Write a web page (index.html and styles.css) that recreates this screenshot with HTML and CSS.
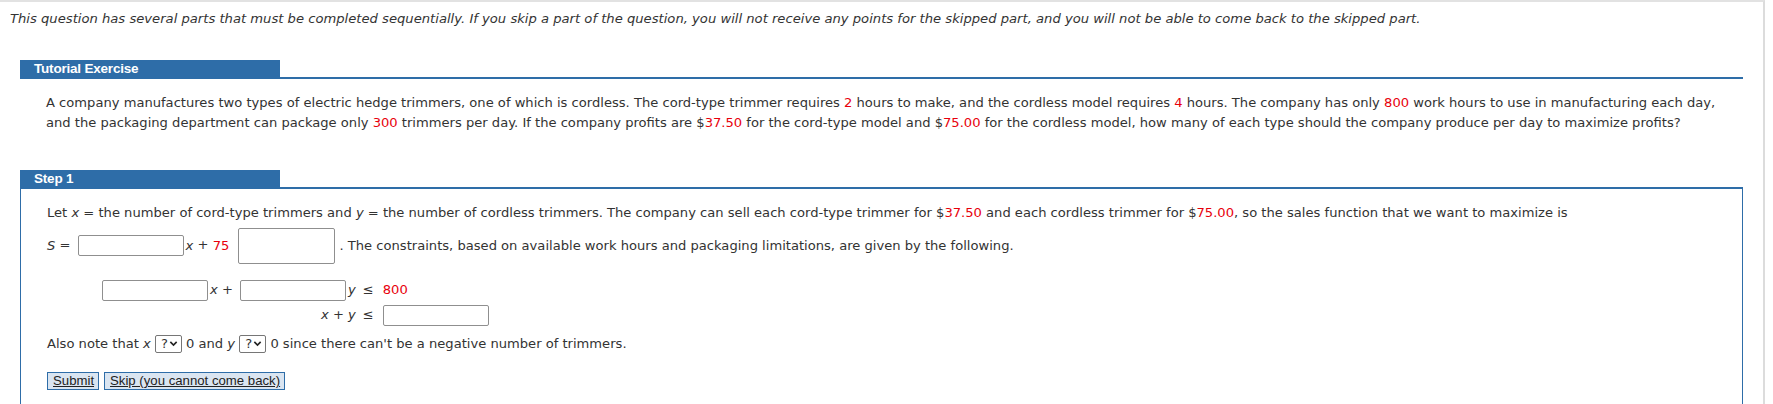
FILE: index.html
```html
<!DOCTYPE html>
<html>
<head>
<meta charset="utf-8">
<link rel="stylesheet" href="styles.css">
</head>
<body>
<div class="page">
  <p class="notice">This question has several parts that must be completed sequentially. If you skip a part of the question, you will not receive any points for the skipped part, and you will not be able to come back to the skipped part.</p>

  <div class="section">
    <div class="sec-head"><div class="sec-label">Tutorial Exercise</div><div class="sec-rule"></div></div>
    <div class="sec-body plain">
      <p class="para">A company manufactures two types of electric hedge trimmers, one of which is cordless. The cord-type trimmer requires <span class="red">2</span> hours to make, and the cordless model requires <span class="red">4</span> hours. The company has only <span class="red">800</span> work hours to use in manufacturing each day, and the packaging department can package only <span class="red">300</span> trimmers per day. If the company profits are $<span class="red">37.50</span> for the cord-type model and $<span class="red">75.00</span> for the cordless model, how many of each type should the company produce per day to maximize profits?</p>
    </div>
  </div>

  <div class="section step">
    <div class="sec-head"><div class="sec-label">Step 1</div><div class="sec-rule"></div></div>
    <div class="sec-body boxed">
      <p class="para">Let <i>x</i> = the number of cord-type trimmers and <i>y</i> = the number of cordless trimmers. The company can sell each cord-type trimmer for $<span class="red">37.50</span> and each cordless trimmer for $<span class="red">75.00</span>, so the sales function that we want to maximize is</p>
      <div class="sline"><i>S</i> = <span class="inp"></span><i>x</i> + <span class="red">75</span> <span class="inp tall"></span><span class="after">. The constraints, based on available work hours and packaging limitations, are given by the following.</span></div>
      <div class="cons">
        <div class="c-lhs"><span class="inp"></span><i>x</i> + <span class="inp"></span><i>y</i></div>
        <div class="c-op">≤</div>
        <div class="c-rhs red">800</div>
        <div class="c-lhs"><i>x</i> + <i>y</i></div>
        <div class="c-op">≤</div>
        <div class="c-rhs"><span class="inp"></span></div>
      </div>
      <p class="para note">Also note that <i>x</i> <span class="sel">?<svg viewBox="0 0 10 10" width="9" height="9"><path d="M1.5 3.2 L5 6.7 L8.5 3.2" fill="none" stroke="#222" stroke-width="1.8"/></svg></span> 0 and <i>y</i> <span class="sel">?<svg viewBox="0 0 10 10" width="9" height="9"><path d="M1.5 3.2 L5 6.7 L8.5 3.2" fill="none" stroke="#222" stroke-width="1.8"/></svg></span> 0 since there can't be a negative number of trimmers.</p>
      <div class="btns"><span class="btn">Submit</span><span class="btn">Skip (you cannot come back)</span></div>
    </div>
  </div>
</div>
</body>
</html>
```

FILE: styles.css
```css
html, body { margin: 0; padding: 0; background: #fff; }
body { font-family: "DejaVu Sans", Verdana, sans-serif; font-size: 13.1px; color: #333; }
.page {
  width: 1763px;
  min-height: 420px;
  border-top: 2px solid #e2e2e2;
  border-right: 2px solid #dcdcdc;
}
.notice {
  margin: 0;
  padding: 9px 0 0 10px;
  font-style: italic;
  font-size: 13.15px;
  line-height: 16px;
}
.section { margin-left: 20px; width: 1723px; margin-top: 33px; }
.step { margin-top: 37px; }
.sec-head { display: flex; align-items: stretch; }
.sec-label {
  width: 246px;
  padding: 2px 0 3px 14px;
  background: #2e6da8;
  color: #fff;
  font-family: "Liberation Sans", Arial, sans-serif;
  font-weight: bold;
  font-size: 13.5px;
  line-height: 14px;
  letter-spacing: -0.2px;
}
.sec-rule { flex: 1; border-bottom: 2px solid #2e6da8; }
.sec-body.plain { padding: 14px 0 0 26px; }
.sec-body.boxed {
  border: 1px solid #2e6da8;
  border-top: none;
  padding: 14px 0 40px 26px;
}
.para { margin: 0; line-height: 20px; }
.red { color: #e8000b; }
i { font-style: italic; }
.sline { margin-top: 4px; height: 36px; line-height: 36px; white-space: nowrap; }
.sline > * { vertical-align: middle; }
.inp {
  display: inline-block;
  vertical-align: middle;
  width: 106px;
  height: 21px;
  box-sizing: border-box;
  border: 1px solid #8f8f8f;
  border-radius: 2px;
  background: #fff;
  margin: 0 2px 0 3px;
}
.inp.tall { height: 36px; width: 97px; margin: 0 5px 0 4px; }
.cons {
  display: grid;
  grid-template-columns: auto auto auto;
  justify-content: start;
  row-gap: 3px;
  margin: 16px 0 0 52px;
  line-height: 21px;
  white-space: nowrap;
}
.c-lhs { text-align: right; }
.c-op { padding: 0 9px 0 7px; }
.c-rhs .inp { margin: 0; }
.note { margin-top: 8px; white-space: nowrap; }
.sel {
  display: inline-flex;
  vertical-align: middle;
  align-items: center;
  gap: 1px;
  height: 18px;
  box-sizing: border-box;
  border: 1px solid #767676;
  border-radius: 2px;
  padding: 0 3px 0 5px;
  margin: -2px 0 0;
  line-height: 16px;
}
.btns { margin-top: 18px; display: flex; gap: 5px; }
.btn {
  font-family: "Liberation Sans", Arial, sans-serif;
  font-size: 13.2px;
  line-height: 16px;
  padding: 0 4px 0 5px;
  background: #dae5f1;
  border: 1px solid #2e6da8;
  color: #222;
  text-decoration: underline;
}
```
